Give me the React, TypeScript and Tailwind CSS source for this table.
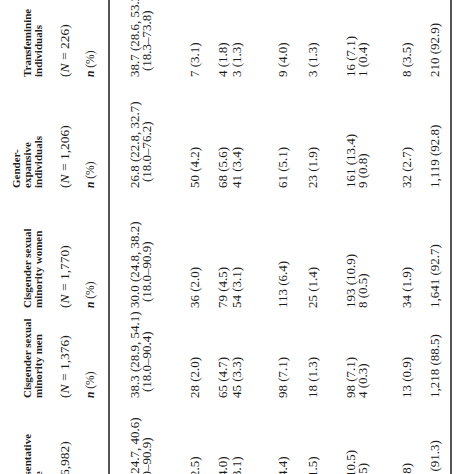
import React from 'react';

const grid = 'grid grid-cols-[106px_90px_120px_111px_120px]';

const headers = [
  ['Representative', 'sample'],
  ['Cisgender sexual', 'minority men'],
  ['Cisgender sexual', 'minority women'],
  ['Gender-', 'expansive', 'individuals'],
  ['Transfeminine', 'individuals'],
];

const sizes = ['6,982', '1,376', '1,770', '1,206', '226'];

// each row: top spacing + one value per column (first row has a second line)
const rows: { gap: string; cells: string[]; sub?: string[] }[] = [
  {
    gap: 'pt-[19px]',
    cells: ['32.4 (24.7, 40.6)', '38.3 (28.9, 54.1)', '30.0 (24.8, 38.2)', '26.8 (22.8, 32.7)', '38.7 (28.6, 53.2)'],
    sub: ['(18.0–90.9)', '(18.0–90.4)', '(18.0–90.9)', '(18.0–76.2)', '(18.3–73.8)'],
  },
  { gap: 'pt-[36px]', cells: ['150 (2.5)', '28 (2.0)', '36 (2.0)', '50 (4.2)', '7 (3.1)'] },
  { gap: 'pt-[16px]', cells: ['280 (4.0)', '65 (4.7)', '79 (4.5)', '68 (5.6)', '4 (1.8)'] },
  { gap: 'pt-[2px]', cells: ['215 (3.1)', '45 (3.3)', '54 (3.1)', '41 (3.4)', '3 (1.3)'] },
  { gap: 'pt-[34px]', cells: ['305 (4.4)', '98 (7.1)', '113 (6.4)', '61 (5.1)', '9 (4.0)'] },
  { gap: 'pt-[18px]', cells: ['105 (1.5)', '18 (1.3)', '25 (1.4)', '23 (1.9)', '3 (1.3)'] },
  { gap: 'pt-[26px]', cells: ['735 (10.5)', '98 (7.1)', '193 (10.9)', '161 (13.4)', '16 (7.1)'] },
  { gap: 'pt-0', cells: ['35 (0.5)', '4 (0.3)', '8 (0.5)', '9 (0.8)', '1 (0.4)'] },
  { gap: 'pt-[32px]', cells: ['56 (0.8)', '13 (0.9)', '34 (1.9)', '32 (2.7)', '8 (3.5)'] },
  { gap: 'pt-[16px]', cells: ['6,378 (91.3)', '1,218 (88.5)', '1,641 (92.7)', '1,119 (92.8)', '210 (92.9)'] },
];

export default function App() {
  return (
    <div className="w-[474px] h-[474px] overflow-hidden bg-white">
      <div className="w-[474px] h-[474px] -rotate-90 font-['Liberation_Serif',serif] text-[#1c1c1c]">
        <div className="ml-[-30px] w-[547px]">
          <div className={`${grid} h-[44px] items-end`}>
            {headers.map((lines, i) => (
              <div key={i} className="flex flex-col text-[11px] leading-[11px] font-bold whitespace-nowrap">
                {lines.map((l) => (
                  <span key={l}>{l}</span>
                ))}
              </div>
            ))}
          </div>

          <div className={`${grid} h-[40px] pt-[14px] text-[13.5px] leading-[13px]`}>
            {sizes.map((n) => (
              <div key={n} className="whitespace-nowrap">
                (<i>N</i> = {n})
              </div>
            ))}
          </div>

          <div className={`${grid} h-[24px] text-[11.5px] leading-[12px]`}>
            {sizes.map((n) => (
              <div key={n} className="whitespace-nowrap">
                <b><i>n</i></b> (%)
              </div>
            ))}
          </div>

          <div className="h-[2px] bg-[#555]" />

          {rows.map((r, ri) => (
            <div key={ri} className={`${grid} ${r.gap} text-[13px] leading-[12px]`}>
              {r.cells.map((c, ci) => (
                <div key={ci} className="flex flex-col whitespace-nowrap">
                  <span>{c}</span>
                  {r.sub && <span className="pl-[6px]">{r.sub[ci]}</span>}
                </div>
              ))}
            </div>
          ))}

          <div className="mt-[9px] h-[2px] bg-[#555]" />
        </div>
      </div>
    </div>
  );
}
